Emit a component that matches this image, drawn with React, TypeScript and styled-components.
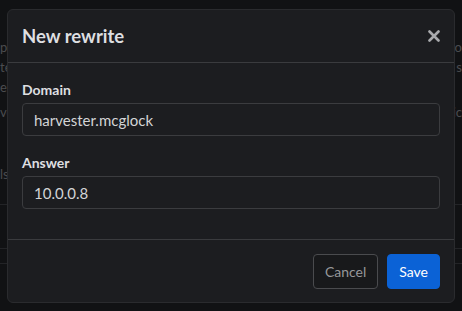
import styled, { createGlobalStyle } from "styled-components";

const GlobalStyle = createGlobalStyle`
  html, body {
    margin: 0;
    padding: 0;
    background: #111214;
  }
  * {
    box-sizing: border-box;
  }
`;

const Page = styled.div`
  position: relative;
  width: 462px;
  height: 311px;
  overflow: hidden;
  background: #111214;
  font-family: Lato, "Noto Sans", sans-serif;
`;

const Backdrop = styled.div`
  display: flex;
  flex-direction: column;
  padding-top: 37px;
  color: #4b4c4f;
  font-size: 13px;
`;

const BackRow = styled.div<{ $h: number }>`
  display: flex;
  justify-content: space-between;
  align-items: center;
  height: ${(p) => p.$h}px;
  line-height: ${(p) => p.$h}px;
`;

const BackLine = styled.div<{ $mt: number }>`
  margin-top: ${(p) => p.$mt}px;
  border-top: 1px solid #232427;
`;

const Modal = styled.div`
  position: absolute;
  left: 7px;
  top: 9px;
  width: 448px;
  background: #1c1d20;
  border: 1px solid #2a2b2e;
  border-radius: 6px;
  color: #dedfe1;
`;

const Header = styled.div`
  display: flex;
  align-items: center;
  justify-content: space-between;
  padding: 14px;
  border-bottom: 1px solid #3a3b3e;
`;

const Title = styled.h5`
  margin: 0;
  font-size: 18.5px;
  line-height: 24px;
  font-weight: 700;
  color: #dedfe1;
`;

const CloseButton = styled.button`
  display: flex;
  align-items: center;
  justify-content: center;
  width: 13px;
  height: 16px;
  padding: 0;
  border: none;
  background: none;
  color: #a9aaad;
  cursor: pointer;
`;

const Body = styled.div`
  padding: 16px 14px 14px;
`;

const FormGroup = styled.div`
  display: flex;
  flex-direction: column;
  margin-bottom: 16px;
`;

const Label = styled.label`
  font-size: 14px;
  line-height: 21px;
  font-weight: 700;
  margin-bottom: 3px;
  color: #dedfe1;
`;

const Input = styled.input`
  height: 33px;
  padding: 0 11px;
  border: 1px solid #3b3c3f;
  border-radius: 4px;
  background: #1c1d20;
  color: #d3d4d6;
  font-family: inherit;
  font-size: 15px;
  outline: none;
`;

const Footer = styled.div`
  display: flex;
  justify-content: flex-end;
  gap: 9px;
  padding: 14px 14px 13px;
  border-top: 1px solid #3a3b3e;
`;

const Button = styled.button<{ $primary?: boolean }>`
  height: 35px;
  padding: 0 11px;
  border-radius: 4px;
  font-family: inherit;
  font-size: 14px;
  cursor: pointer;
  border: 1px solid ${(p) => (p.$primary ? "#0b62d6" : "#4a4b4e")};
  background: ${(p) => (p.$primary ? "#0b62d6" : "#18191b")};
  color: ${(p) => (p.$primary ? "#ffffff" : "#96979a")};
`;

export default function App() {
  return (
    <>
      <GlobalStyle />
      <Page>
        <Backdrop>
          <BackRow $h={20}>
            <span>p</span>
            <span>co</span>
          </BackRow>
          <BackRow $h={20}>
            <span>te</span>
            <span>s</span>
          </BackRow>
          <BackRow $h={20}>
            <span>e</span>
            <span />
          </BackRow>
          <BackRow $h={5} />
          <BackRow $h={20}>
            <span>ve</span>
            <span>ic</span>
          </BackRow>
          <BackRow $h={42} />
          <BackRow $h={20}>
            <span>ls</span>
            <span />
          </BackRow>
          <BackLine $mt={20} />
          <BackLine $mt={43} />
          <BackLine $mt={14} />
        </Backdrop>
        <Modal>
          <Header>
            <Title>New rewrite</Title>
            <CloseButton aria-label="Close">
              <svg width="12" height="12" viewBox="0 0 12 12">
                <path
                  d="M1.5 1.5 L10.5 10.5 M10.5 1.5 L1.5 10.5"
                  stroke="currentColor"
                  strokeWidth="2.6"
                  strokeLinecap="round"
                />
              </svg>
            </CloseButton>
          </Header>
          <Body>
            <FormGroup>
              <Label>Domain</Label>
              <Input defaultValue="harvester.mcglock" />
            </FormGroup>
            <FormGroup>
              <Label>Answer</Label>
              <Input defaultValue="10.0.0.8" />
            </FormGroup>
          </Body>
          <Footer>
            <Button>Cancel</Button>
            <Button $primary>Save</Button>
          </Footer>
        </Modal>
      </Page>
    </>
  );
}
